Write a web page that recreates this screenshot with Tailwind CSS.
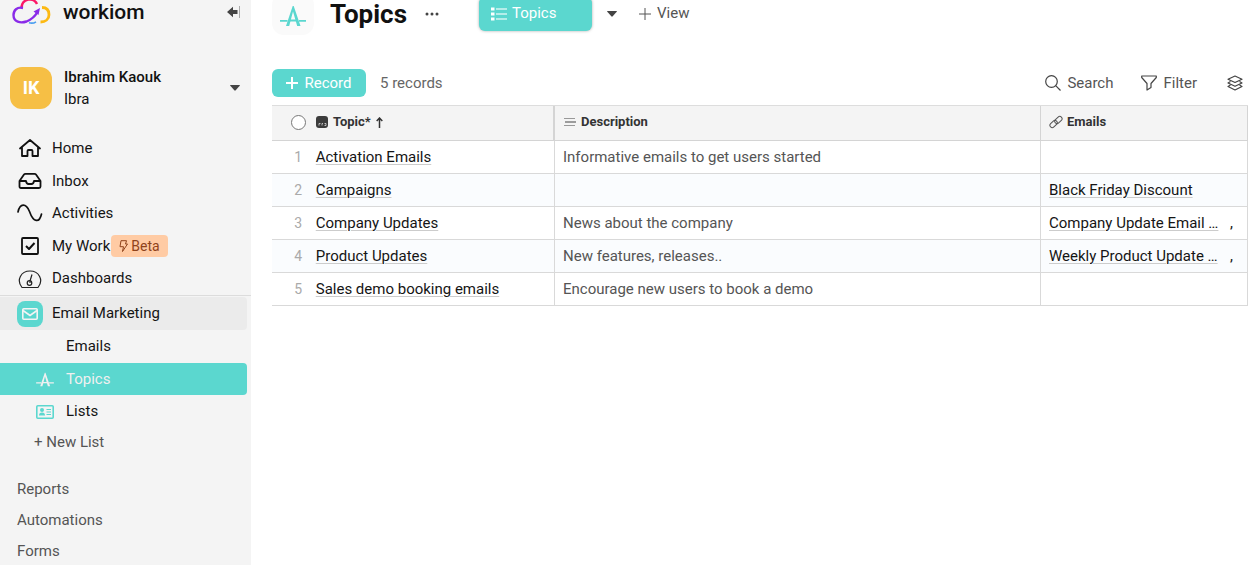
<!DOCTYPE html>
<html lang="en">
  <head>
    <meta charset="UTF-8" />
    <meta name="viewport" content="width=device-width, initial-scale=1.0" />
    <title>Workiom - Topics</title>
    <script src="https://cdn.jsdelivr.net/npm/@tailwindcss/browser@4"></script>
  </head>

  <body class="flex h-screen overflow-hidden bg-white font-['Roboto',sans-serif] text-[15px] text-[#555]">
    <!-- Shared icon shapes -->
    <svg class="hidden">
      <symbol id="pulse" viewBox="0 0 26 22">
        <path d="M0 15h7.500v1.800H0zM10 14.500h6.500v2H10zM19 15h7v1.800h-7z" fill="currentColor" />
        <path d="M12.700 1h1L20.500 21h-3.300L13 6.500 9.200 21H6z" fill="currentColor" />
      </symbol>
      <symbol id="caret" viewBox="0 0 10 6">
        <path d="M.5 0h9q.8 0 .2.700L5.700 5.300q-.7.700-1.400 0L.3.700Q-.3 0 .5 0z" fill="currentColor" />
      </symbol>
      <symbol id="plus" viewBox="0 0 12 12">
        <path d="M6 0v12M0 6h12" stroke="currentColor" fill="none" />
      </symbol>
    </svg>

    <!-- Sidebar -->
    <aside class="w-[251px] shrink-0 bg-[#f4f4f4]">
      <header class="flex h-6 items-center pr-[10px] pl-3">
        <svg class="h-6 w-[39px]" viewBox="0 0 39 24" fill="none" stroke-width="2.400">
          <path d="M30 7.500c5 0 7 3 7 7.200 0 4.500-3.500 7.300-8.500 7.300" stroke="#fcb913" stroke-width="2.800" />
          <path d="M17 22.800c3 .8 5 .4 7-1" stroke="#4a9df0" stroke-width="1.600" />
          <path d="M9.500 8.500C9.500-2 22-3 25 4" stroke="#fb1766" />
          <path d="M11 8C5 6.500 1.500 10.500 1.500 15c0 7 7 8.500 13 6.500 5-2 9-6 11-9.500" stroke="#8a2be8" />
          <path d="M21.500 11.500 28 8l-1.500 7z" fill="#8a2be8" />
        </svg>
        <span class="ml-3 text-[21px] leading-6 font-medium text-[#111]">workiom</span>
        <button class="ml-auto" aria-label="Collapse sidebar">
          <svg class="h-3 w-[14px]" viewBox="0 0 14 12">
            <path d="M0 6 6 .8V4h4.500v4H6v3.200z" fill="#444" />
            <path d="M12.500 0v12" stroke="#aaa" />
          </svg>
        </button>
      </header>

      <div class="mt-[43px] flex h-[42px] items-center pr-[11px] pl-[10px] text-[15px] leading-[22px] text-[#111]">
        <div class="flex size-[42px] items-center justify-center rounded-xl bg-[#f6bf45] text-[18px] font-bold text-white">IK</div>
        <div class="ml-3">
          <p class="font-medium">Ibrahim Kaouk</p>
          <p class="text-[15px]">Ibra</p>
        </div>
        <button class="ml-auto text-[#444]" aria-label="Switch account">
          <svg class="h-[6px] w-[10px]"><use href="#caret" /></svg>
        </button>
      </div>

      <nav class="mt-[23px] flex h-[164px] flex-col border-b border-[#dcdcdc] text-[#151515]">
        <a href="#" class="flex flex-1 items-center gap-[9px] pl-[17px]">
          <svg class="h-5 w-[26px]" viewBox="0 0 26 20" fill="none" stroke="#111" stroke-width="1.800" stroke-linejoin="round" stroke-linecap="round">
            <path d="M3 10.500 13 2l10 8.500M5 9.500v8.500h5.500v-5q0-1 1-1h3q1 0 1 1v5H21V9.500" />
          </svg>
          Home
        </a>
        <a href="#" class="flex flex-1 items-center gap-[9px] pl-[17px]">
          <svg class="h-5 w-[26px]" viewBox="0 0 26 20" fill="none" stroke="#111" stroke-width="1.800" stroke-linejoin="round">
            <path d="M2.500 10 7 3.500q.5-.7 1.500-.7h9q1 0 1.500.7l4.500 6.500v5.500q0 1.500-1.500 1.500H4q-1.500 0-1.500-1.500zh6.500q.5 3 2.500 3h3q2 0 2.500-3h6.500" />
          </svg>
          Inbox
        </a>
        <a href="#" class="flex flex-1 items-center gap-[9px] pl-[17px]">
          <svg class="h-5 w-[26px]" viewBox="0 0 26 20" fill="none" stroke="#111" stroke-width="1.700" stroke-linecap="round">
            <path d="M1 9C3 0 9 0 12.500 8.500 16.500 20 22.500 20 24.500 11" />
          </svg>
          Activities
        </a>
        <a href="#" class="flex flex-1 items-center gap-[9px] pl-[17px]">
          <svg class="h-5 w-[26px]" viewBox="0 0 26 20" fill="none" stroke="#111" stroke-width="1.800" stroke-linejoin="round">
            <rect x="5" y="2" width="16" height="16" rx="1" />
            <path d="m9 10 3 3 5.500-6" stroke-width="2" />
          </svg>
          <span>My Work</span>
          <span class="-ml-2 flex h-[22px] items-center gap-[3px] rounded bg-[#ffcba4] px-2 text-[14px] text-[#8f431b]">
            <svg class="h-3 w-[9px]" viewBox="0 0 9 12" fill="none" stroke="#8f431b" stroke-linejoin="round">
              <path d="M2 .7h5.500L6.500 4h2l-5 7.500 1-4.800H1z" />
            </svg>
            Beta
          </span>
        </a>
        <a href="#" class="flex flex-1 items-center gap-[9px] pl-[17px]">
          <svg class="h-5 w-[26px]" viewBox="0 0 26 20" fill="none" stroke="#222" stroke-width="1.200" stroke-linejoin="round">
            <path d="M5 18.500C-1 11 4 2 13 2s14 9 8 16.500z" />
            <circle cx="12.500" cy="14" r="2.300" />
            <path d="M13 12 15 5.500M13 14v-3" />
          </svg>
          Dashboards
        </a>
      </nav>

      <nav class="mt-px mr-1 text-[#151515]">
        <a href="#" class="flex h-[33px] items-center gap-[9px] rounded-r bg-[#ebebeb] pl-[17px]">
          <span class="flex size-[26px] items-center justify-center rounded-lg bg-[#5bd7cf]">
            <svg class="h-3 w-4" viewBox="0 0 16 12" fill="none" stroke="#f4f4f4" stroke-width="1.600">
              <rect x=".8" y=".8" width="14.400" height="10.400" rx="1" />
              <path d="m1 2.500 7 5 7-5" />
            </svg>
          </span>
          Email Marketing
        </a>
        <a href="#" class="flex h-[33px] items-center pl-[66px]">Emails</a>
        <a href="#" class="flex h-8 items-center gap-3 rounded-r bg-[#5bd7cf] pl-9 text-[#f0f0f0]">
          <svg class="h-[15px] w-[18px]"><use href="#pulse" /></svg>
          Topics
        </a>
        <a href="#" class="flex h-[33px] items-center gap-3 pl-9">
          <svg class="h-[14px] w-[18px] text-[#5bd7cf]" viewBox="0 0 18 14" fill="none" stroke="currentColor">
            <rect x=".8" y=".8" width="16.400" height="12.400" rx="1" stroke-width="1.600" />
            <circle cx="6" cy="5" r="2" fill="currentColor" stroke="none" />
            <path d="M3 10.500q0-3 3-3t3 3z" fill="currentColor" stroke="none" />
            <path d="M10.500 4.500h4.500M10.500 7h4.500M10.500 9.500h4.500" />
          </svg>
          Lists
        </a>
        <button class="flex h-[29px] items-center pl-[34px] text-[#555]">+ New List</button>
      </nav>

      <nav class="mt-[17px] pl-[17px]">
        <a href="#" class="flex h-[31px] items-center">Reports</a>
        <a href="#" class="flex h-[31px] items-center">Automations</a>
        <a href="#" class="flex h-[31px] items-center">Forms</a>
      </nav>
    </aside>

    <!-- Main content -->
    <main class="min-w-0 grow pl-[21px]">
      <header class="-mt-2 flex h-[43px] items-center">
        <div class="flex size-[42px] items-center justify-center rounded-xl bg-[#fafafa] text-[#5bd7cf]">
          <svg class="mt-1 h-[22px] w-[26px]"><use href="#pulse" /></svg>
        </div>
        <h1 class="ml-4 text-[26px] leading-8 font-bold text-[#111]">Topics</h1>
        <button class="ml-[18px]" aria-label="More options">
          <svg class="h-[4px] w-[14px]" viewBox="0 0 14 4" fill="#444">
            <circle cx="2" cy="2" r="1.500" /><circle cx="7" cy="2" r="1.500" /><circle cx="12" cy="2" r="1.500" />
          </svg>
        </button>
        <button class="ml-10 flex h-[34px] w-[113px] items-center gap-[5px] rounded-md bg-[#5bd7cf] pl-3 text-white shadow-[0_0_3px_#aaa]">
          <svg class="h-[14px] w-4" viewBox="0 0 16 14" fill="none" stroke="#fff">
            <path d="M0 2h3.500M0 7h3.500M0 12h3.500" stroke-width="3" />
            <path d="M5 2h11M5 7h11M5 12h11" stroke-width="1.800" opacity=".55" />
          </svg>
          Topics
        </button>
        <button class="ml-[15px] text-[#444]" aria-label="View options">
          <svg class="h-[6px] w-[10px]"><use href="#caret" /></svg>
        </button>
        <button class="ml-[22px] flex items-center gap-[6px]">
          <svg class="size-3"><use href="#plus" /></svg>
          View
        </button>
      </header>

      <div class="mt-[34px] flex h-7 items-center pr-[7px]">
        <button class="flex h-7 w-[94px] items-center justify-center gap-[6px] rounded-md bg-[#5bd7cf] text-white">
          <svg class="size-3 stroke-2"><use href="#plus" /></svg>
          Record
        </button>
        <span class="ml-[14px] text-[#666]">5 records</span>
        <button class="ml-auto flex items-center gap-[6px]">
          <svg class="size-4" viewBox="0 0 16 16" fill="none" stroke="#444" stroke-width="1.200">
            <circle cx="6.500" cy="6.500" r="5.800" /><path d="m10.700 10.700 4.800 4.800" />
          </svg>
          Search
        </button>
        <button class="ml-7 flex items-center gap-[6px]">
          <svg class="size-4" viewBox="0 0 16 16" fill="none" stroke="#444" stroke-width="1.200" stroke-linejoin="round">
            <path d="M.7 1h14.600v1.500L10 8.500v4L6 15V8.500L.7 2.500z" />
          </svg>
          Filter
        </button>
        <button class="ml-[30px]" aria-label="Group">
          <svg class="size-4" viewBox="0 0 16 16" fill="none" stroke="#444" stroke-width="1.200" stroke-linejoin="round">
            <path d="M8 1 15 4.200 8 7.500 1 4.200zM3.500 6.500 1 8l7 3.300L15 8l-2.500-1.500M3.500 10 1 11.500 8 15l7-3.500-2.500-1.500" />
          </svg>
        </button>
      </div>

      <!-- Records -->
      <div class="mt-2 pr-[2px]">
        <table class="w-full table-fixed border-separate border-spacing-0 border-t border-[#ddd] text-left">
          <thead class="h-[35px] bg-[#f4f4f4] text-[13px] text-[#333]">
            <tr>
              <th class="w-[283px] border-r-2 border-b border-[#d4d4d4] px-0 pt-0 pb-[2px]">
                <div class="flex items-center">
                  <input type="checkbox" aria-label="Select all" class="ml-[19px] size-[15px] appearance-none rounded-full border border-[#777] bg-white" />
                  <svg class="ml-[10px] size-3" viewBox="0 0 12 12">
                    <rect width="12" height="12" rx="3" fill="#3c3c3c" />
                    <path d="M3 9.500V7.500h1.500M6 9.500v-2h1M8.500 7.500h1.500v2H8.500" stroke="#ddd" fill="none" stroke-width=".8" />
                  </svg>
                  <span class="ml-[5px]">Topic*</span>
                  <svg class="ml-[5px] h-[11px] w-[7px]" viewBox="0 0 7 11" fill="none" stroke="#333" stroke-width="1.500">
                    <path d="M3.500 11V1M.7 4 3.500 1l2.800 3" />
                  </svg>
                </div>
              </th>
              <th class="border-r border-b border-[#d4d4d4] px-0 pt-0 pb-[2px]">
                <div class="flex items-center gap-[5px] pl-2">
                  <svg class="h-[10px] w-[13px]" viewBox="0 0 13 10" fill="none">
                    <path d="M1 1.500h11M1 8.500h11" stroke="#999" /><path d="M2 5h11" stroke="#444" />
                  </svg>
                  Description
                </div>
              </th>
              <th class="w-[207px] border-r border-b border-[#d4d4d4] px-0 pt-0 pb-[2px]">
                <div class="flex items-center gap-1 pl-2">
                  <svg class="size-[14px]" viewBox="0 0 14 14" fill="none" stroke="#555">
                    <rect x="5.200" y="2.700" width="8.400" height="4.600" rx="2.300" transform="rotate(-45 9.400 5)" />
                    <rect x=".4" y="6.700" width="8.400" height="4.600" rx="2.300" transform="rotate(-45 4.600 9)" />
                  </svg>
                  Emails
                </div>
              </th>
            </tr>
          </thead>
          <tbody id="rows"></tbody>
        </table>
      </div>
    </main>

    <script>
      const records = [
        { topic: 'Activation Emails', description: 'Informative emails to get users started', email: '' },
        { topic: 'Campaigns', description: '', email: 'Black Friday Discount' },
        { topic: 'Company Updates', description: 'News about the company', email: 'Company Update Email …', more: true },
        { topic: 'Product Updates', description: 'New features, releases..', email: 'Weekly Product Update …', more: true },
        { topic: 'Sales demo booking emails', description: 'Encourage new users to book a demo', email: '' },
      ];

      const link = (text) =>
        `<a href="#" class="text-[#151515] underline decoration-[#ccc] decoration-1 underline-offset-2">${text}</a>`;

      document.getElementById('rows').innerHTML = records
        .map((record, index) => `
          <tr class="h-[33px] even:bg-[#fafcfe]">
            <td class="border-r border-b border-[#d9d9d9] p-0">
              <span class="inline-block w-[30px] text-right text-[14px] text-[#aaa]">${index + 1}</span>
              <span class="ml-[10px]">${link(record.topic)}</span>
            </td>
            <td class="border-r border-b border-[#d9d9d9] py-0 pr-0 pl-2">${record.description}</td>
            <td class="border-r border-b border-[#d9d9d9] py-0 pr-[14px] pl-2">
              <div class="flex justify-between">
                ${record.email ? link(record.email) : ''}
                ${record.more ? '<span class="text-[#151515]">,</span>' : ''}
              </div>
            </td>
          </tr>`
        ).join('');
    </script>
  </body>
</html>
